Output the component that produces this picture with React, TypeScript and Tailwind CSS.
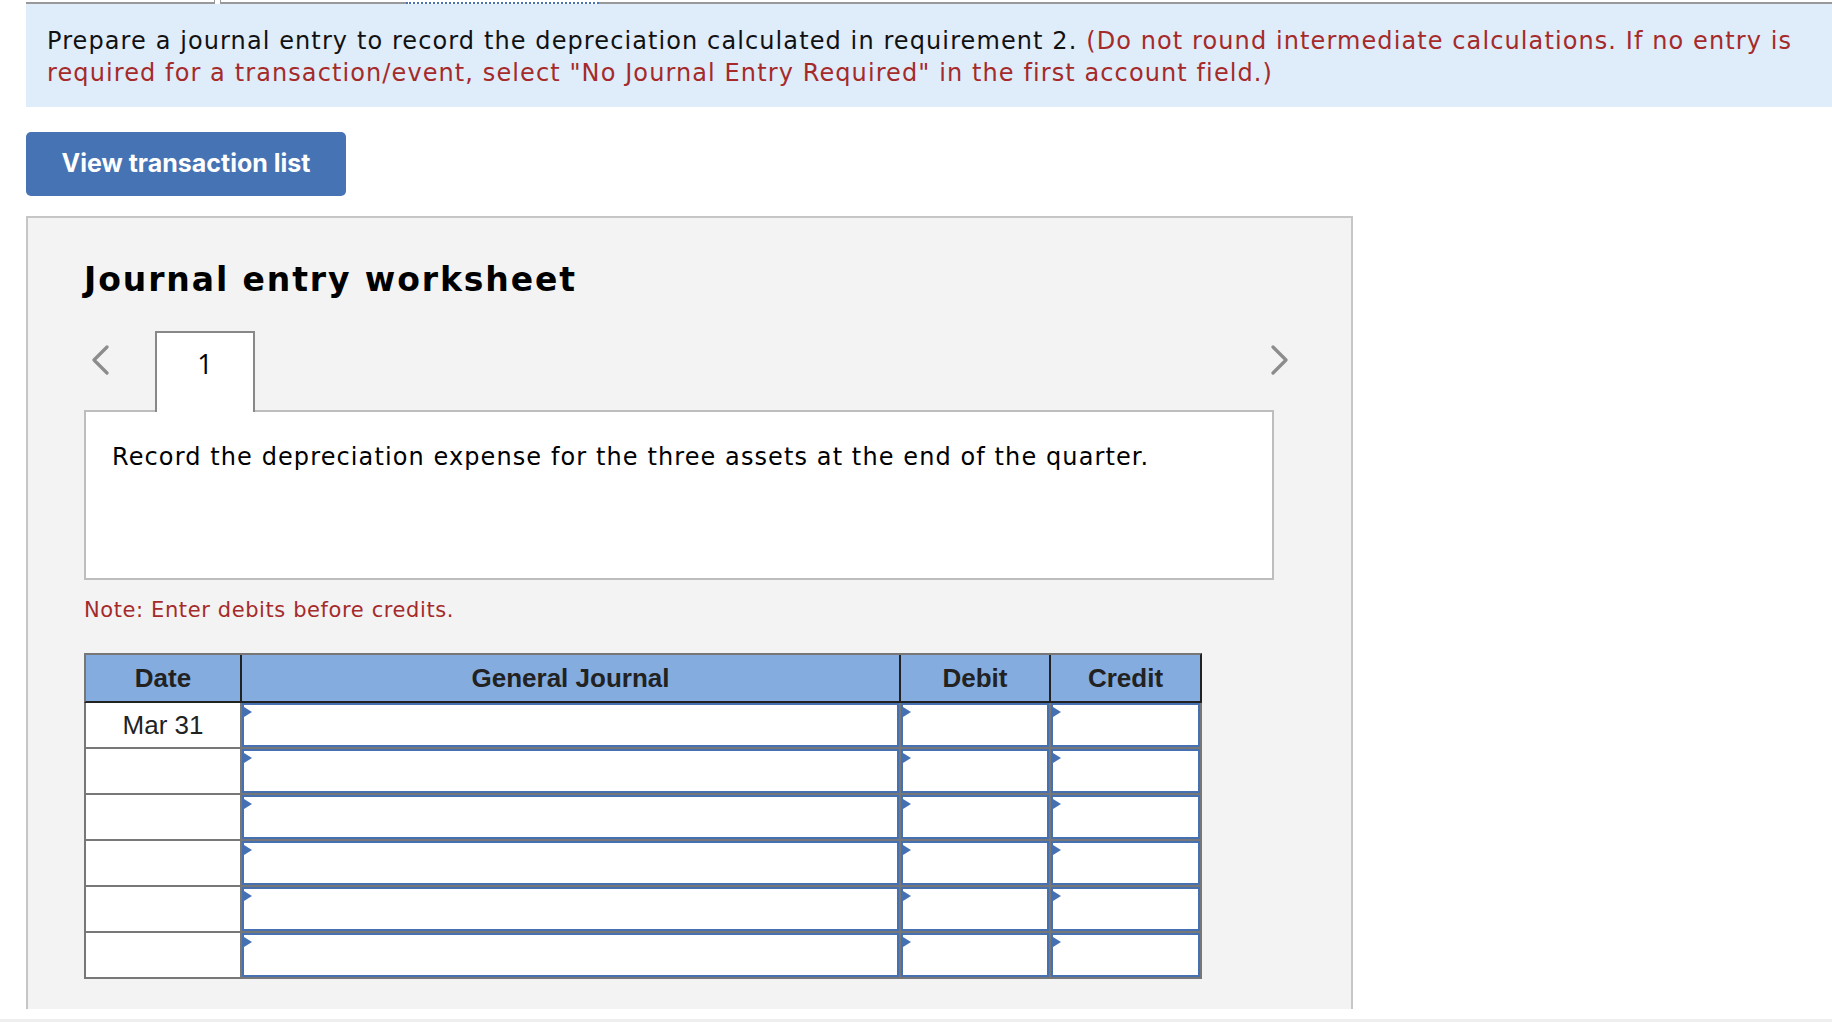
import React from "react";

const verdana = { fontFamily: '"DejaVu Sans", Verdana, sans-serif' };
const arial = { fontFamily: '"Liberation Sans", Arial, sans-serif' };

function Chevron({ dir }: { dir: "left" | "right" }) {
  return (
    <svg width="19" height="30" viewBox="0 0 19 30" fill="none">
      <polyline
        points={dir === "left" ? "16,2 3,15 16,28" : "3,2 16,15 3,28"}
        stroke="#8c8c8c"
        strokeWidth="3.2"
        strokeLinecap="round"
        strokeLinejoin="round"
      />
    </svg>
  );
}

function InputBox() {
  return (
    <div className="relative h-full border-2 border-[#4571b3] bg-white">
      <div className="absolute left-0 top-[2px] h-0 w-0 border-y-[5px] border-l-[8px] border-y-transparent border-l-[#4571b3]" />
    </div>
  );
}

export default function App() {
  const rows = ["Mar 31", "", "", "", "", ""];

  return (
    <div className="min-h-screen w-[1832px] bg-white" style={verdana}>
      {/* tabs strip cut off at the top */}
      <div className="ml-[26px] flex h-[4px]">
        <div className="w-[189px] border-b-2 border-r border-[#999]" />
        <div className="w-[5px]" />
        <div className="w-[186px] border-b-2 border-l border-[#999]" />
        <div className="w-[193px] border-b-2 border-dotted border-[#4a75b5]" />
        <div className="flex-1 border-b-2 border-[#999]" />
      </div>

      {/* instructions */}
      <div className="ml-[26px] bg-[#dfecf9] pb-[18px] pl-[21px] pr-[10px] pt-[21px] text-[24px] leading-[32px] tracking-[1.1px] text-[#111]">
        Prepare a journal entry to record the depreciation calculated in requirement 2.{" "}
        <span className="text-[#a52a2a]">
          (Do not round intermediate calculations. If no entry is
          <br />
          required for a transaction/event, select "No Journal Entry Required" in the first account field.)
        </span>
      </div>

      <button
        className="ml-[26px] mt-[25px] flex h-[64px] w-[320px] items-center justify-center rounded-[5px] bg-[#4673b3] text-[25px] font-bold text-white"
        style={{ fontFamily: "Inter, sans-serif" }}
      >
        View transaction list
      </button>

      {/* worksheet panel */}
      <div className="ml-[26px] mt-[20px] h-[793px] w-[1327px] border-x-2 border-t-2 border-[#c6c6c6] bg-[#f3f3f3] pl-[56px] pt-[42px]">
        <h2 className="text-[33px] font-bold leading-[40px] tracking-[1.9px] text-black">Journal entry worksheet</h2>

        <div className="mt-[31px] flex h-[79px] w-[1210px] items-start">
          <div className="ml-[7px] mt-[14px]">
            <Chevron dir="left" />
          </div>
          <div
            className="relative z-10 ml-[45px] h-[81px] w-[100px] border-x-2 border-t-2 border-[#888] bg-white pt-[13px] text-center text-[27px] leading-[36px] text-black"
            style={{ fontFamily: '"Open Sans", sans-serif' }}
          >
            1
          </div>
          <div className="flex-1" />
          <div className="mr-[5px] mt-[14px]">
            <Chevron dir="right" />
          </div>
        </div>

        <div className="h-[170px] w-[1190px] border-2 border-[#bdbdbd] bg-white pl-[26px] pt-[30px] text-[24px] leading-[30px] tracking-[1.1px] text-black">
          Record the depreciation expense for the three assets at the end of the quarter.
        </div>

        <p className="mt-[16px] text-[21px] leading-[28px] tracking-[0.6px] text-[#a52a2a]">Note: Enter debits before credits.</p>

        {/* journal table */}
        <div className="mt-[29px] w-[1118px] text-[26px] text-[#222]" style={arial}>
          <div className="flex h-[50px] border-2 border-b-[#222] border-l-[#777] border-r-[#222] border-t-[#777] bg-[#84acdf] font-bold">
            <div className="flex w-[156px] items-center justify-center border-r-2 border-[#222]">Date</div>
            <div className="flex w-[659px] items-center justify-center border-r-2 border-[#222]">General Journal</div>
            <div className="flex w-[150px] items-center justify-center border-r-2 border-[#222]">Debit</div>
            <div className="flex flex-1 items-center justify-center">Credit</div>
          </div>
          <div className="border-x-2 border-[#777]">
            {rows.map((d, i) => (
              <div key={i} className="flex h-[46px] border-b-2 border-[#777]">
                <div className="flex w-[156px] items-center justify-center border-r-2 border-[#777] bg-white">{d}</div>
                <div className="h-full w-[659px] border-r-2 border-[#777]">
                  <InputBox />
                </div>
                <div className="h-full w-[150px] border-r-2 border-[#777]">
                  <InputBox />
                </div>
                <div className="h-full flex-1">
                  <InputBox />
                </div>
              </div>
            ))}
          </div>
        </div>
      </div>
      <div className="mt-[10px] h-[3px] bg-[#efefef]" />
    </div>
  );
}
